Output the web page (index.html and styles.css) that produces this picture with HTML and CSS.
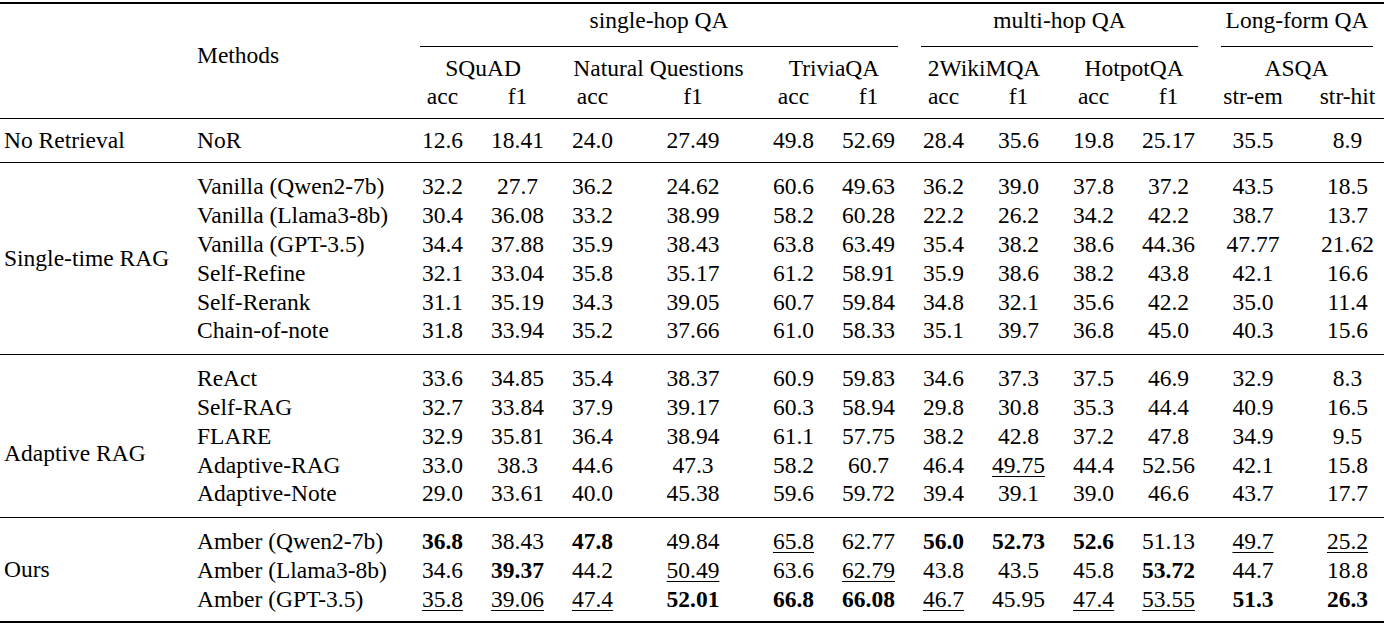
FILE: index.html
```html
<!DOCTYPE html>
<html lang="en">
<head>
<meta charset="utf-8">
<title>Results</title>
<link rel="stylesheet" href="styles.css">
</head>
<body>
<table class="results">
<colgroup>
<col class="c-cat"><col class="c-meth">
<col class="c-a"><col class="c-f"><col class="c-a"><col class="c-nq"><col class="c-a"><col class="c-f">
<col class="c-a"><col class="c-f"><col class="c-a"><col class="c-f">
<col class="c-em"><col class="c-hit">
</colgroup>
<thead>
<tr class="h1">
<th rowspan="3" class="cat-h"></th>
<th rowspan="3" class="meth-h">Methods</th>
<th colspan="6" class="grp"><div class="grp-t">single-hop QA</div></th>
<th colspan="4" class="grp"><div class="grp-t">multi-hop QA</div></th>
<th colspan="2" class="grp"><div class="grp-t">Long-form QA</div></th>
</tr>
<tr class="h2">
<th colspan="2">SQuAD</th><th colspan="2">Natural Questions</th><th colspan="2">TriviaQA</th>
<th colspan="2">2WikiMQA</th><th colspan="2">HotpotQA</th><th colspan="2">ASQA</th>
</tr>
<tr class="h3">
<th>acc</th><th>f1</th><th>acc</th><th>f1</th><th>acc</th><th>f1</th>
<th>acc</th><th>f1</th><th>acc</th><th>f1</th><th>str-em</th><th>str-hit</th>
</tr>
</thead>
<tbody class="single">
<tr>
<td class="cat">No Retrieval</td><td class="meth">NoR</td>
<td>12.6</td><td>18.41</td><td>24.0</td><td>27.49</td><td>49.8</td><td>52.69</td><td>28.4</td><td>35.6</td><td>19.8</td><td>25.17</td><td>35.5</td><td>8.9</td>
</tr>
</tbody>
<tbody class="group">
<tr class="first">
<td rowspan="6" class="cat label">Single-time RAG</td><td class="meth">Vanilla (Qwen2-7b)</td>
<td>32.2</td><td>27.7</td><td>36.2</td><td>24.62</td><td>60.6</td><td>49.63</td><td>36.2</td><td>39.0</td><td>37.8</td><td>37.2</td><td>43.5</td><td>18.5</td>
</tr>
<tr>
<td class="meth">Vanilla (Llama3-8b)</td>
<td>30.4</td><td>36.08</td><td>33.2</td><td>38.99</td><td>58.2</td><td>60.28</td><td>22.2</td><td>26.2</td><td>34.2</td><td>42.2</td><td>38.7</td><td>13.7</td>
</tr>
<tr>
<td class="meth">Vanilla (GPT-3.5)</td>
<td>34.4</td><td>37.88</td><td>35.9</td><td>38.43</td><td>63.8</td><td>63.49</td><td>35.4</td><td>38.2</td><td>38.6</td><td>44.36</td><td>47.77</td><td>21.62</td>
</tr>
<tr>
<td class="meth">Self-Refine</td>
<td>32.1</td><td>33.04</td><td>35.8</td><td>35.17</td><td>61.2</td><td>58.91</td><td>35.9</td><td>38.6</td><td>38.2</td><td>43.8</td><td>42.1</td><td>16.6</td>
</tr>
<tr>
<td class="meth">Self-Rerank</td>
<td>31.1</td><td>35.19</td><td>34.3</td><td>39.05</td><td>60.7</td><td>59.84</td><td>34.8</td><td>32.1</td><td>35.6</td><td>42.2</td><td>35.0</td><td>11.4</td>
</tr>
<tr class="last">
<td class="meth">Chain-of-note</td>
<td>31.8</td><td>33.94</td><td>35.2</td><td>37.66</td><td>61.0</td><td>58.33</td><td>35.1</td><td>39.7</td><td>36.8</td><td>45.0</td><td>40.3</td><td>15.6</td>
</tr>
</tbody>
<tbody class="group">
<tr class="first">
<td rowspan="5" class="cat label label-low">Adaptive RAG</td><td class="meth">ReAct</td>
<td>33.6</td><td>34.85</td><td>35.4</td><td>38.37</td><td>60.9</td><td>59.83</td><td>34.6</td><td>37.3</td><td>37.5</td><td>46.9</td><td>32.9</td><td>8.3</td>
</tr>
<tr>
<td class="meth">Self-RAG</td>
<td>32.7</td><td>33.84</td><td>37.9</td><td>39.17</td><td>60.3</td><td>58.94</td><td>29.8</td><td>30.8</td><td>35.3</td><td>44.4</td><td>40.9</td><td>16.5</td>
</tr>
<tr>
<td class="meth">FLARE</td>
<td>32.9</td><td>35.81</td><td>36.4</td><td>38.94</td><td>61.1</td><td>57.75</td><td>38.2</td><td>42.8</td><td>37.2</td><td>47.8</td><td>34.9</td><td>9.5</td>
</tr>
<tr>
<td class="meth">Adaptive-RAG</td>
<td>33.0</td><td>38.3</td><td>44.6</td><td>47.3</td><td>58.2</td><td>60.7</td><td>46.4</td><td><span class="u">49.75</span></td><td>44.4</td><td>52.56</td><td>42.1</td><td>15.8</td>
</tr>
<tr class="last">
<td class="meth">Adaptive-Note</td>
<td>29.0</td><td>33.61</td><td>40.0</td><td>45.38</td><td>59.6</td><td>59.72</td><td>39.4</td><td>39.1</td><td>39.0</td><td>46.6</td><td>43.7</td><td>17.7</td>
</tr>
</tbody>
<tbody class="group ours">
<tr class="first">
<td rowspan="3" class="cat label">Ours</td><td class="meth">Amber (Qwen2-7b)</td>
<td><b>36.8</b></td><td>38.43</td><td><b>47.8</b></td><td>49.84</td><td><span class="u">65.8</span></td><td>62.77</td><td><b>56.0</b></td><td><b>52.73</b></td><td><b>52.6</b></td><td>51.13</td><td><span class="u">49.7</span></td><td><span class="u">25.2</span></td>
</tr>
<tr>
<td class="meth">Amber (Llama3-8b)</td>
<td>34.6</td><td><b>39.37</b></td><td>44.2</td><td><span class="u">50.49</span></td><td>63.6</td><td><span class="u">62.79</span></td><td>43.8</td><td>43.5</td><td>45.8</td><td><b>53.72</b></td><td>44.7</td><td>18.8</td>
</tr>
<tr class="last">
<td class="meth">Amber (GPT-3.5)</td>
<td><span class="u">35.8</span></td><td><span class="u">39.06</span></td><td><span class="u">47.4</span></td><td><b>52.01</b></td><td><b>66.8</b></td><td><b>66.08</b></td><td><span class="u">46.7</span></td><td>45.95</td><td><span class="u">47.4</span></td><td><span class="u">53.55</span></td><td><b>51.3</b></td><td><b>26.3</b></td>
</tr>
</tbody>
</table>
</body>
</html>
```

FILE: styles.css
```css
html, body {
  margin: 0;
  padding: 0;
  background: #ffffff;
}

body {
  font-family: "Liberation Serif", "Times New Roman", serif;
  color: #000000;
}

.results {
  border-collapse: separate;
  border-spacing: 0;
  table-layout: fixed;
  width: 1384px;
  margin-top: 2px;
  border-top: 2px solid #000;
  border-bottom: 2px solid #000;
  font-size: 23.5px;
  line-height: 28.85px;
}

.c-cat { width: 183px; }
.c-meth { width: 225px; }
.c-a { width: 69px; }
.c-f { width: 81px; }
.c-nq { width: 132px; }
.c-em { width: 88px; }
.c-hit { width: 87px; }

.results th,
.results td {
  padding: 0;
  font-weight: normal;
  text-align: center;
  white-space: nowrap;
  vertical-align: top;
}

.results b {
  font-weight: bold;
}

.u {
  text-decoration: underline;
  text-decoration-thickness: 1px;
  text-underline-offset: 3px;
  text-decoration-skip-ink: none;
}

.h1 th {
  padding-top: 1.6px;
}

.h1 th.cat-h {
  padding: 0;
}

.h1 th.meth-h {
  padding-top: 36.6px;
  text-align: left;
  text-indent: 14px;
}

.grp-t {
  margin: 0 11px 0 12px;
  padding-bottom: 11.5px;
  border-bottom: 1px solid #000;
}

.h2 th {
  padding-top: 6.6px;
}

.h3 th {
  padding-bottom: 6.7px;
}

.h3 th:last-child,
tbody td:last-child {
  text-indent: 14px;
}

.results td.cat {
  text-align: left;
  text-indent: 4px;
}

.results td.meth {
  text-align: left;
  text-indent: 14px;
}

.single td {
  border-top: 1px solid #000;
  padding-top: 6.6px;
  padding-bottom: 7.6px;
}

.group tr.first td {
  border-top: 1px solid #000;
  padding-top: 9.3px;
}

.group tr.last td {
  padding-bottom: 8.5px;
}

.ours tr.last td {
  padding-bottom: 7.2px;
}

.group tr.first td.label {
  padding-top: 0;
  padding-bottom: 0;
  vertical-align: middle;
}

.group tr.first td.label-low {
  padding-top: 35.5px;
}
```
